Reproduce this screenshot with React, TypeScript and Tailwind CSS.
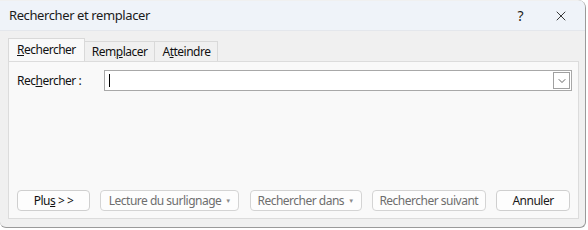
import React from 'react';
import { X, ChevronDown } from 'lucide-react';

const font = { fontFamily: '"Noto Sans", "Open Sans", sans-serif' };

const Tab = ({ active, children }: { active?: boolean; children: React.ReactNode }) => (
  <div
    className={
      active
        ? 'h-[23px] px-[8px] flex items-center bg-[#f9f9f9] border border-b-0 border-[#d9d9d9] -mb-px z-10 relative'
        : 'h-[20px] mt-[3px] px-[7px] flex items-center bg-[#f0f0f0] border border-b-0 border-l-0 border-[#d9d9d9]'
    }
  >
    {children}
  </div>
);

const Btn = ({
  children,
  disabled,
  width,
  caret,
}: {
  children: React.ReactNode;
  disabled?: boolean;
  width: string;
  caret?: boolean;
}) => (
  <button
    className={`${width} h-[21px] flex items-center justify-center gap-[4px] rounded-[4px] border bg-[#fdfdfd] ${
      disabled ? 'border-[#d4d4d4] text-[#6e6e6e]' : 'border-[#cfcfcf] text-[#1a1a1a]'
    }`}
  >
    <span>{children}</span>
    {caret && <span className="text-[6px] text-[#8a8a8a] leading-none">▼</span>}
  </button>
);

export default function App() {
  return (
    <div className="w-[588px] h-[230px] bg-white text-[12px] tracking-[-0.5px]" style={font}>
      <div className="w-[586px] h-[228px] pt-[1px] bg-[#f0f0f0] border-r border-b border-[#9a9a9a] rounded-tr-[8px] rounded-br-[6px] rounded-bl-[6px] overflow-hidden flex flex-col">
        {/* title bar */}
        <div className="h-[30px] bg-[#eff3f9] border-b border-[#e4e7ec] flex items-center justify-between pl-[9px] pr-[16px]">
          <span className="text-[13px] text-[#1b1b1b] tracking-[-0.4px]">Rechercher et remplacer</span>
          <div className="flex items-center gap-[30px]">
            <span className="text-[14px] text-[#1b1b1b]">?</span>
            <X size={16} strokeWidth={1.3} className="text-[#1b1b1b]" />
          </div>
        </div>

        {/* body */}
        <div className="flex-1 px-[8px] pt-[7px] pb-[8px] flex flex-col">
          <div className="flex text-[#111]">
            <Tab active>
              <span><u>R</u>echercher</span>
            </Tab>
            <Tab>
              <span>Rem<u>p</u>lacer</span>
            </Tab>
            <Tab>
              <span>A<u>t</u>teindre</span>
            </Tab>
          </div>
          <div className="flex-1 bg-[#f9f9f9] border border-[#dcdcdc] mr-[-2px] pl-[8px] pr-[6px] pt-[8px] pb-[7px] flex flex-col justify-between">
            <div className="flex items-center">
              <span className="w-[87px] text-[#111]">
                Rec<u>h</u>ercher :
              </span>
              <div className="flex-1 h-[21px] bg-white border border-[#a8a8a8] flex items-center justify-between pl-[4px] pr-[1px]">
                <span className="w-px h-[13px] bg-black" />
                <div className="w-[17px] h-[17px] border border-[#a0a0a0] flex items-center justify-center">
                  <ChevronDown size={12} strokeWidth={1.5} className="text-[#333]" />
                </div>
              </div>
            </div>
            <div className="flex items-center justify-between pr-[2px]">
              <Btn width="w-[73px]">
                <span className="text-[#111]">Plu<u>s</u> &gt; &gt;</span>
              </Btn>
              <Btn width="w-[139px]" disabled caret>
                Lecture du surlignage
              </Btn>
              <Btn width="w-[112px]" disabled caret>
                Rechercher dans
              </Btn>
              <Btn width="w-[114px]" disabled>
                Rechercher suivant
              </Btn>
              <Btn width="w-[74px]">Annuler</Btn>
            </div>
          </div>
        </div>
      </div>
    </div>
  );
}
